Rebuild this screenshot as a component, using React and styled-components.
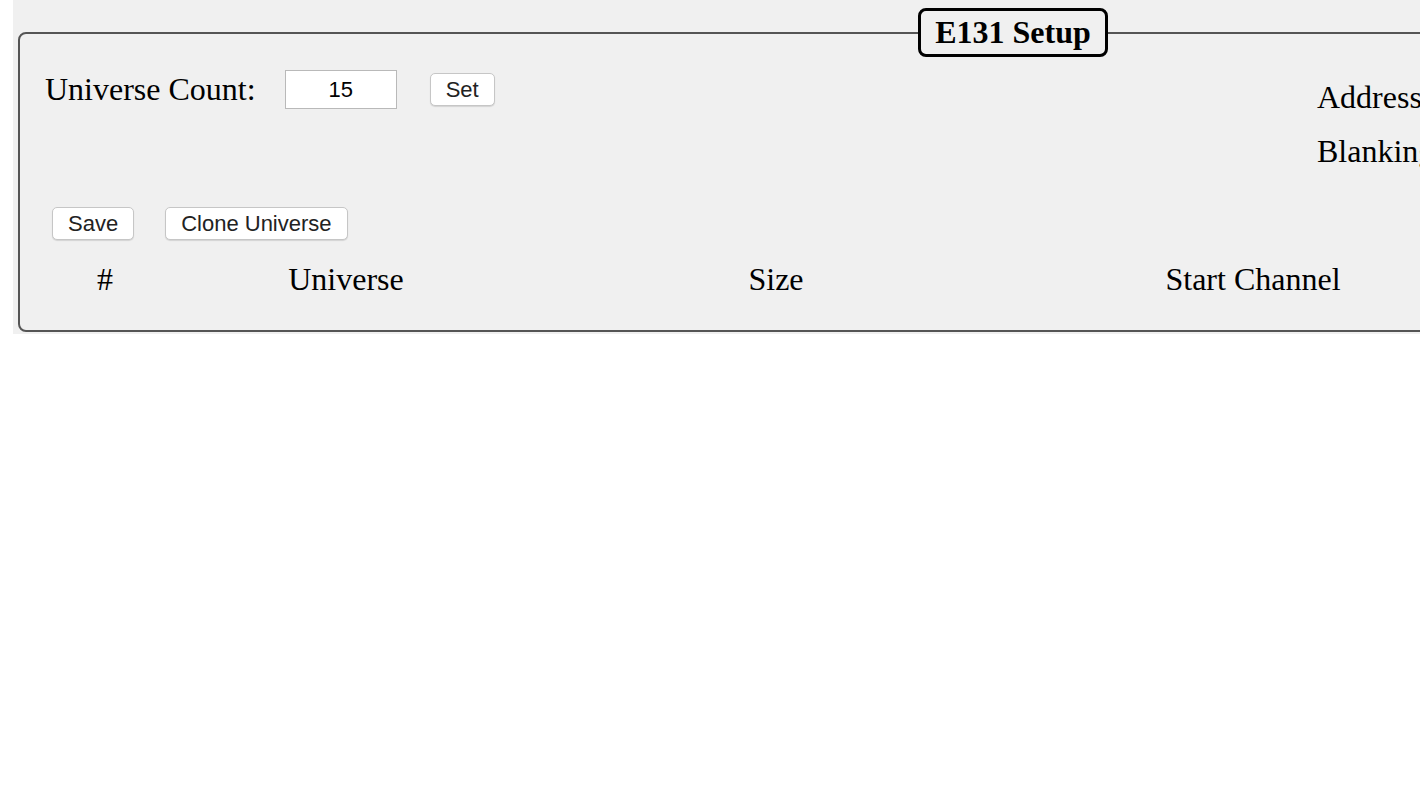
import React, { useState } from "react";
import styled, { createGlobalStyle } from "styled-components";

const GlobalStyle = createGlobalStyle`
  html, body {
    margin: 0;
    padding: 0;
    background: #ffffff;
    overflow: hidden;
  }
  body {
    font-family: "Liberation Serif", "Times New Roman", serif;
    color: #000;
  }
`;

const Page = styled.div`
  margin-left: 13px;
  width: fit-content;
  padding: 8px 10px 2px 5px;
  background: #f0f0f0;
`;

const SetupBox = styled.fieldset`
  width: 1990px;
  box-sizing: border-box;
  margin: 0;
  padding: 13px 25px 32px 25px;
  border: 2px solid #555555;
  border-radius: 8px;
  min-inline-size: auto;
`;

const Title = styled.legend`
  margin: 0 auto;
  padding: 3px 14px;
  border: 3px solid #000;
  border-radius: 8px;
  font-size: 32px;
  font-weight: bold;
  line-height: 37px;
  background: #f0f0f0;
`;

const TopSection = styled.div`
  display: grid;
  grid-template-columns: 1272px auto;
  align-items: start;
`;

const CountRow = styled.div`
  display: flex;
  align-items: center;
  height: 39px;
`;

const Label = styled.span`
  font-size: 32px;
  line-height: 37px;
  margin-right: 29px;
`;

const CountInput = styled.input`
  box-sizing: border-box;
  width: 112px;
  height: 39px;
  margin: 0 33px 0 0;
  padding: 0 6px;
  border: 1px solid #b9b9b9;
  background: #ffffff;
  font-family: "Liberation Sans", Arial, sans-serif;
  font-size: 22px;
  color: #000;
  text-align: center;
  outline: none;
`;

const Button = styled.button`
  box-sizing: border-box;
  height: 33px;
  margin: 0;
  padding: 0 15px;
  border: 1px solid #c6c6c6;
  border-radius: 5px;
  background: #ffffff;
  box-shadow: 0 1px 1px rgba(0, 0, 0, 0.12);
  font-family: "Liberation Sans", Arial, sans-serif;
  font-size: 22px;
  color: #222;
  cursor: pointer;
`;

const Options = styled.div`
  display: flex;
  flex-direction: column;
`;

const OptionRow = styled.div`
  display: flex;
  align-items: center;
  min-height: 54px;
  font-size: 32px;
  line-height: 37px;
  white-space: nowrap;
`;

const ButtonRow = styled.div`
  display: flex;
  gap: 31px;
  margin-top: 29px;
  padding-left: 7px;
`;

const HeaderRow = styled.div`
  display: grid;
  grid-template-columns: 120px 362px 498px 456px;
  margin-top: 21px;
`;

const HeaderCell = styled.div`
  font-size: 32px;
  line-height: 37px;
  text-align: center;
  white-space: nowrap;
`;

const columns = ["#", "Universe", "Size", "Start Channel"];

export default function App() {
  const [count, setCount] = useState("15");

  return (
    <>
      <GlobalStyle />
      <Page>
        <SetupBox>
          <Title>E131 Setup</Title>
          <TopSection>
            <CountRow>
              <Label>Universe Count:</Label>
              <CountInput
                value={count}
                onChange={(e) => setCount(e.target.value)}
              />
              <Button>Set</Button>
            </CountRow>
            <Options>
              <OptionRow>Address Mode:</OptionRow>
              <OptionRow>Blanking Timeout:</OptionRow>
            </Options>
          </TopSection>
          <ButtonRow>
            <Button>Save</Button>
            <Button>Clone Universe</Button>
          </ButtonRow>
          <HeaderRow>
            {columns.map((c) => (
              <HeaderCell key={c}>{c}</HeaderCell>
            ))}
          </HeaderRow>
        </SetupBox>
      </Page>
    </>
  );
}
